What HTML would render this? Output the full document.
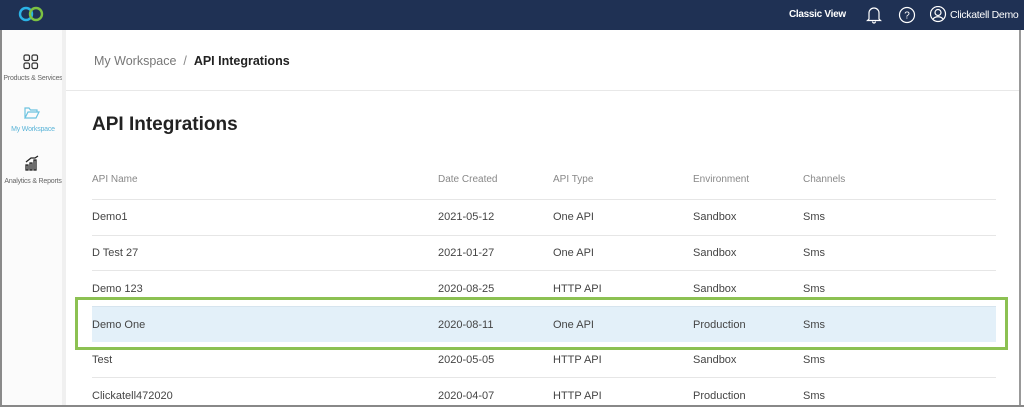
<!DOCTYPE html>
<html><head><style>
*{margin:0;padding:0;box-sizing:border-box}
body{width:1024px;height:407px;overflow:hidden;background:#fff;font-family:"Liberation Sans",sans-serif;position:relative}
.hdr{position:absolute;left:0;top:0;width:1024px;height:30px;background:#1f3154}
.side{position:absolute;left:0;top:30px;width:62px;height:377px;background:#fbfbfb;border-left:2px solid #8a8a8a}
.gut{position:absolute;left:62px;top:30px;width:4px;height:377px;background:#f0f0f0}
.rb{position:absolute;left:1019px;top:30px;width:2px;height:377px;background:#999}
.bb{position:absolute;left:0;top:405px;width:1024px;height:2px;background:#888}
.lab{position:absolute;width:62px;left:0;text-align:center;font-size:7px;color:#666;letter-spacing:-0.2px}
.t{position:absolute;font-size:11px;color:#444}
.line{position:absolute;left:92px;width:904px;height:1px;background:#e6e6e6}
</style></head><body>
<div class="hdr">
<svg style="position:absolute;left:17px;top:4px" width="28" height="20"><circle cx="9" cy="10" r="6" fill="none" stroke="#2bb3e6" stroke-width="2.4"/><circle cx="19" cy="10" r="6" fill="none" stroke="#7cc242" stroke-width="2.4"/></svg>
<div style="position:absolute;left:789px;top:9px;color:#fff;font-size:10px;font-weight:bold;letter-spacing:-0.3px">Classic View</div>
<svg style="position:absolute;left:866px;top:6px" width="16" height="18"><path d="M3 13 L3 7 A5 5 0 0 1 13 7 L13 13 L14.5 14.5 L1.5 14.5 Z M6.5 15.5 A1.5 1.5 0 0 0 9.5 15.5" fill="none" stroke="#fff" stroke-width="1.2"/></svg>
<svg style="position:absolute;left:898px;top:6px" width="18" height="18"><circle cx="9" cy="9" r="7.5" fill="none" stroke="#fff" stroke-width="1.2"/><text x="9" y="12.5" font-size="10" fill="#fff" text-anchor="middle" font-family="Liberation Sans">?</text></svg>
<svg style="position:absolute;left:930px;top:6px" width="18" height="18"><circle cx="8" cy="8" r="7.5" fill="none" stroke="#fff" stroke-width="1.2"/><circle cx="8" cy="6.5" r="3" fill="none" stroke="#fff" stroke-width="1.2"/><path d="M3 13 A6 5 0 0 1 13 13" fill="none" stroke="#fff" stroke-width="1.2"/></svg>
<div style="position:absolute;left:950px;top:9px;color:#fff;font-size:10.5px;letter-spacing:-0.3px">Clickatell Demo</div>
</div>
<div class="side">
<svg style="position:absolute;left:21px;top:24px" width="16" height="16"><g fill="none" stroke="#333" stroke-width="1.2"><rect x="1" y="1" width="5.5" height="5.5" rx="1.5"/><rect x="9" y="1" width="5.5" height="5.5" rx="1.5"/><rect x="1" y="9" width="5.5" height="5.5" rx="1.5"/><rect x="9" y="9" width="5.5" height="5.5" rx="1.5"/></g></svg>
<div class="lab" style="top:45px">Products &amp; Services</div>
<svg style="position:absolute;left:21px;top:75px" width="18" height="16"><path d="M2 13 L2 3 L6 3 L7.5 5 L14 5 L14 7 M2 13 L5 7 L16 7 L13 13 Z" fill="none" stroke="#6cc3e0" stroke-width="1.2"/></svg>
<div class="lab" style="top:96px;color:#5ab4d8">My Workspace</div>
<svg style="position:absolute;left:22px;top:125px" width="16" height="16"><g fill="none" stroke="#222" stroke-width="1.3"><rect x="2" y="10" width="2" height="5"/><rect x="6" y="8" width="2" height="7"/><rect x="10" y="5" width="2" height="10"/><path d="M2 7 L7 3 L11 3 L14 1"/></g></svg>
<div class="lab" style="top:148px">Analytics &amp; Reports</div>
</div>
<div class="gut"></div>
<div style="position:absolute;left:66px;top:90px;width:954px;height:1px;background:#e8e8e8"></div>
<div style="position:absolute;left:94px;top:54px;font-size:12.5px;color:#777">My Workspace <span style="color:#888">&nbsp;/&nbsp;</span> <span style="color:#222;font-weight:bold">API Integrations</span></div>
<div style="position:absolute;left:92px;top:114px;font-size:19px;font-weight:bold;color:#222">API Integrations</div>
<div class="t" style="left:92px;top:174px;font-size:10px;color:#888">API Name</div>
<div class="t" style="left:438px;top:174px;font-size:10px;color:#888">Date Created</div>
<div class="t" style="left:553px;top:174px;font-size:10px;color:#888">API Type</div>
<div class="t" style="left:693px;top:174px;font-size:10px;color:#888">Environment</div>
<div class="t" style="left:803px;top:174px;font-size:10px;color:#888">Channels</div>
<div class="line" style="top:199px"></div>
<div class="line" style="top:235px"></div>
<div class="line" style="top:270px"></div>
<div class="line" style="top:377px"></div>
<div style="position:absolute;left:92px;top:306px;width:904px;height:36px;background:#e3f0f9;border-top:1px solid #d6e4ee"></div>
<div style="position:absolute;left:75px;top:297px;width:933px;height:53px;border:3px solid #8cc152"></div>
<div class="t" style="left:92px;top:211px">Demo1</div><div class="t" style="left:438px;top:211px">2021-05-12</div><div class="t" style="left:553px;top:211px">One API</div><div class="t" style="left:693px;top:211px">Sandbox</div><div class="t" style="left:803px;top:211px">Sms</div>
<div class="t" style="left:92px;top:247px">D Test 27</div><div class="t" style="left:438px;top:247px">2021-01-27</div><div class="t" style="left:553px;top:247px">One API</div><div class="t" style="left:693px;top:247px">Sandbox</div><div class="t" style="left:803px;top:247px">Sms</div>
<div class="t" style="left:92px;top:283px">Demo 123</div><div class="t" style="left:438px;top:283px">2020-08-25</div><div class="t" style="left:553px;top:283px">HTTP API</div><div class="t" style="left:693px;top:283px">Sandbox</div><div class="t" style="left:803px;top:283px">Sms</div>
<div class="t" style="left:92px;top:319px">Demo One</div><div class="t" style="left:438px;top:319px">2020-08-11</div><div class="t" style="left:553px;top:319px">One API</div><div class="t" style="left:693px;top:319px">Production</div><div class="t" style="left:803px;top:319px">Sms</div>
<div class="t" style="left:92px;top:354px">Test</div><div class="t" style="left:438px;top:354px">2020-05-05</div><div class="t" style="left:553px;top:354px">HTTP API</div><div class="t" style="left:693px;top:354px">Sandbox</div><div class="t" style="left:803px;top:354px">Sms</div>
<div class="t" style="left:92px;top:390px">Clickatell472020</div><div class="t" style="left:438px;top:390px">2020-04-07</div><div class="t" style="left:553px;top:390px">HTTP API</div><div class="t" style="left:693px;top:390px">Production</div><div class="t" style="left:803px;top:390px">Sms</div>
<div class="rb"></div>
<div class="bb"></div>
</body></html>
